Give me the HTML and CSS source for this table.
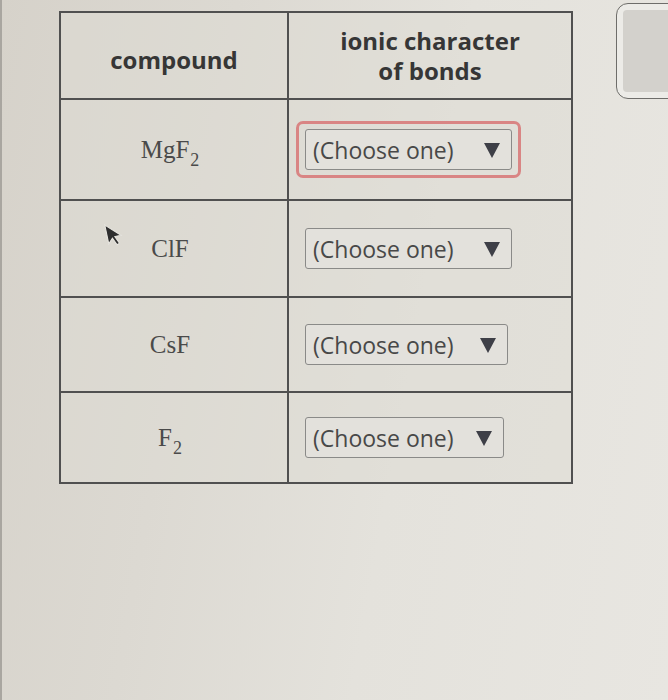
FILE: index.html
```html
<!DOCTYPE html>
<html>
<head>
<meta charset="utf-8">
<link rel="stylesheet" href="styles.css">
</head>
<body>
<div class="screen">
  <div class="stage">
    <table class="grid">
      <tr class="head">
        <th class="c1">compound</th>
        <th class="c2">ionic character<br>of bonds</th>
      </tr>
      <tr class="r1">
        <td class="cmp">MgF<sub>2</sub></td>
        <td class="pick">
          <div class="ring">
            <div class="select"><span>(Choose one)</span><svg class="caret" viewBox="0 0 16 16"><polygon points="0,1 16,1 8,16" /></svg></div>
          </div>
        </td>
      </tr>
      <tr class="r2">
        <td class="cmp">ClF</td>
        <td class="pick"><div class="select"><span>(Choose one)</span><svg class="caret" viewBox="0 0 16 16"><polygon points="0,1 16,1 8,16" /></svg></div></td>
      </tr>
      <tr class="r3">
        <td class="cmp">CsF</td>
        <td class="pick"><div class="select"><span>(Choose one)</span><svg class="caret" viewBox="0 0 16 16"><polygon points="0,1 16,1 8,16" /></svg></div></td>
      </tr>
      <tr class="r4">
        <td class="cmp">F<sub>2</sub></td>
        <td class="pick"><div class="select"><span>(Choose one)</span><svg class="caret" viewBox="0 0 16 16"><polygon points="0,1 16,1 8,16" /></svg></div></td>
      </tr>
    </table>
    <div class="side"><div class="side-inner"></div></div>
  </div>
  <svg class="cursor" viewBox="0 0 16 24"><path d="M1 1 L1 19 L5.5 14.5 L8.5 21.5 L11 20.5 L8 13.5 L14 13.5 Z" /></svg>
</div>
</body>
</html>
```
FILE: styles.css
```css
html, body {
  margin: 0;
  padding: 0;
}
body {
  width: 668px;
  height: 700px;
  overflow: hidden;
  background: linear-gradient(100deg, #d6d2ca 0%, #dcd9d2 30%, #e4e2dc 60%, #e8e6e1 100%);
  font-family: "Open Sans", "Liberation Sans", sans-serif;
}
.screen {
  position: relative;
  width: 668px;
  height: 700px;
  border-left: 2px solid #a9a6a0;
  box-sizing: border-box;
}
.stage {
  display: flex;
  align-items: flex-start;
  padding: 3px 0 0 57px;
  gap: 43px;
}
.grid {
  flex-shrink: 0;
  margin-top: 8px;
  width: 514px;
  border-collapse: collapse;
  border: 2px solid #3a3a3a;
  background: rgba(222, 219, 212, 0.5);
}
.grid th, .grid td {
  border: 2px solid #505050;
  padding: 0;
  text-align: center;
}
.grid th {
  font-weight: 700;
  font-size: 24px;
  line-height: 30px;
  color: #363636;
}
.c1 {
  width: 226px;
  padding-top: 8px !important;
}
.head { height: 87px; }
.r1 { height: 101px; }
.r2 { height: 97px; }
.r3 { height: 95px; }
.r4 { height: 91px; }
.cmp {
  font-family: "Liberation Serif", "Times New Roman", serif;
  font-size: 25px;
  color: #4a4a4a;
  padding-right: 8px !important;
}
.cmp sub {
  font-size: 18px;
  vertical-align: -8px;
  line-height: 0;
  margin-left: 1px;
}
.pick {
  text-align: left !important;
  padding-left: 16px !important;
}
.ring {
  display: inline-block;
  border: 3px solid #d98584;
  border-radius: 7px;
  padding: 5px 6px;
  margin-left: -9px;
}
.select {
  display: inline-flex;
  align-items: center;
  justify-content: space-between;
  box-sizing: border-box;
  width: 207px;
  height: 41px;
  padding: 0 11px 0 7px;
  border: 1.5px solid #8a8a88;
  border-radius: 3px;
  background: #e3e1dc;
  font-size: 23px;
  color: #484848;
}
.r3 .select { width: 203px; }
.r4 .select { width: 199px; }
.caret {
  width: 16px;
  height: 16px;
  fill: #3e3f47;
}
.side {
  width: 72px;
  height: 96px;
  box-sizing: border-box;
  border: 1.5px solid #6e6d6a;
  border-radius: 12px;
  padding: 6px;
  background: #ecebe7;
  flex-shrink: 0;
}
.side-inner {
  width: 100%;
  height: 100%;
  border-radius: 4px;
  background: #d3d1cc;
}
.cursor {
  position: absolute;
  left: 104px;
  top: 222px;
  width: 17px;
  height: 26px;
  fill: #2e2e2e;
  stroke: #e8e6e0;
  stroke-width: 1;
  transform: rotate(-12deg);
}
```
